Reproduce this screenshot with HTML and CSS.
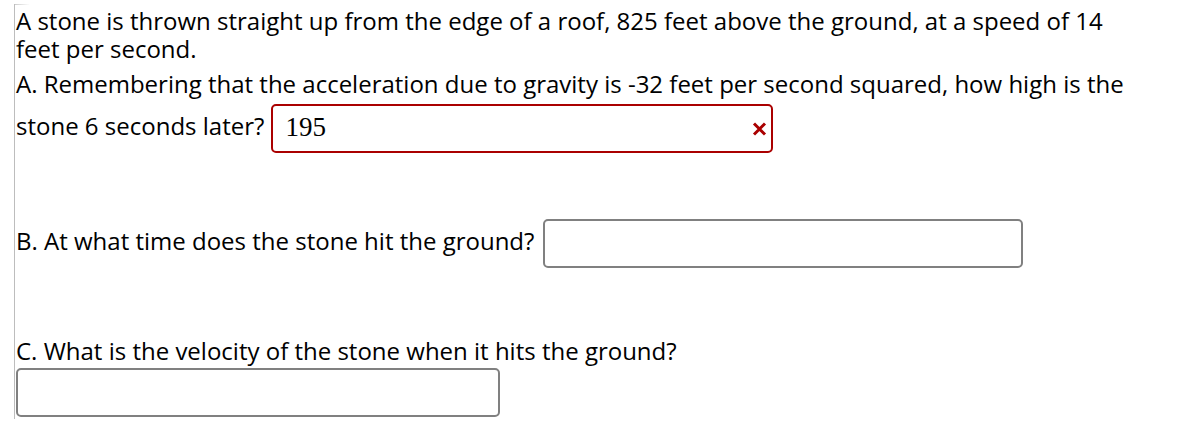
FILE: index.html
```html
<!DOCTYPE html>
<html lang="en">
<head>
    <meta charset="UTF-8">
    <title>Stone problem</title>
    <link rel="stylesheet" href="styles.css">
</head>
<body>
    <div class="problem">
        <p class="intro">A stone is thrown straight up from the edge of a roof, 825 feet above the ground, at a speed of 14 feet per second.</p>

        <p class="part part-a">A. Remembering that the acceleration due to gravity is -32 feet per second squared, how high is the stone 6 seconds later?
            <span class="answer wrong answer-a">
                <span class="value">195</span>
                <svg class="mark" width="15" height="14" viewBox="0 0 15 14">
                    <path d="M2 1.5 L13 12.5 M13 1.5 L2 12.5" stroke="#a00" stroke-width="3"/>
                </svg>
            </span>
        </p>

        <p class="part part-b">B. At what time does the stone hit the ground?
            <span class="answer answer-b"></span>
        </p>

        <p class="part part-c">C. What is the velocity of the stone when it hits the ground?</p>
        <span class="answer answer-c"></span>
    </div>
</body>
</html>
```

FILE: styles.css
```css
body {
    margin: 0;
    font-family: "Open Sans", sans-serif;
    font-size: 24px;
    line-height: 28px;
    color: #000;
    background: #fff;
}
.problem {
    position: relative;
    margin: 4px 0 0 14px;
    padding: 3px 0 2px 1px;
    border-left: 1px solid #bdbdbd;
    width: 1125px;
}
/* faint top edge of the question frame */
.problem::before {
    content: "";
    position: absolute;
    top: 0;
    left: 0;
    width: 15px;
    height: 1px;
    background: linear-gradient(to right, #ccc, rgba(204, 204, 204, 0));
}
p {
    margin: 0;
}
.part-a {
    margin-top: 7px;
}
.answer {
    display: inline-flex;
    align-items: center;
    justify-content: space-between;
    box-sizing: border-box;
    height: 49px;
    margin: 6px 0;
    border: 2px solid #808080;
    border-radius: 5px;
    vertical-align: middle;
}
.answer.wrong {
    border-color: #a00;
}
.answer-a {
    width: 502px;
    padding: 0 4px 0 13px;
}
.value {
    font-family: "Liberation Serif", "DejaVu Serif", serif;
    font-size: 27px;
    line-height: 28px;
    margin-bottom: 3px;
}
.part-b {
    margin-top: 54px;
}
.answer-b {
    width: 480px;
    margin-left: 2px;
}
.part-c {
    margin-top: 63px;
}
.answer-c {
    display: block;
    width: 484px;
    margin: 3px 0 0;
}
```
